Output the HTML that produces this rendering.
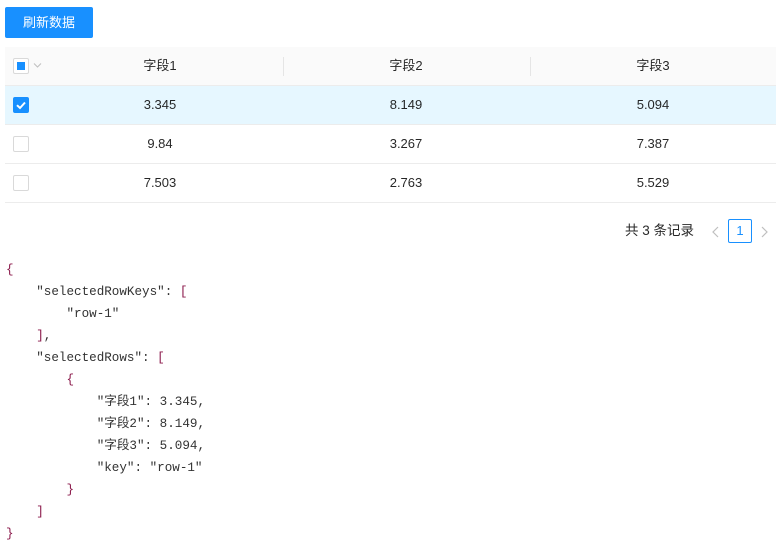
<!DOCTYPE html>
<html><head><meta charset="utf-8"><style>
body{margin:0;width:780px;height:555px;background:#fff;font-family:"Liberation Sans","Noto Sans CJK SC",sans-serif;font-size:13px;color:rgba(0,0,0,.85);position:relative;overflow:hidden}
.btn{position:absolute;left:5px;top:7px;width:88px;height:31px;background:#1890ff;border-radius:2px;color:#fff;font-size:13px;line-height:31px;text-align:center}
.tbl{position:absolute;left:5px;top:47px;width:771px}
.row{position:relative;height:38px;border-bottom:1px solid #ececec}
.row.h{background:#fafafa;height:38px}
.row.sel{background:#e6f7ff}
.c{position:absolute;top:0;height:38px;line-height:38px;text-align:center;width:246px}
.c1{left:32px}.c2{left:278px}.c3{left:525px}
.div{position:absolute;top:10px;width:1px;height:19px;background:#e5e5e5}
.cb{position:absolute;left:8px;top:11px;width:14px;height:14px;border:1px solid #d9d9d9;border-radius:2px;background:#fff}
.cb.on{background:#1890ff;border-color:#1890ff}
.json{position:absolute;left:6px;top:259px;margin:0;font-family:"Liberation Mono","Noto Sans CJK SC",monospace;font-size:12.6px;line-height:22px;color:#333}
.p{color:#8b1a4b}
.pg{position:absolute;top:219px}
</style></head><body>
<div class="btn">刷新数据</div>
<div class="tbl">
 <div class="row h">
  <div class="cb"><div style="position:absolute;left:3px;top:3px;width:8px;height:8px;background:#1890ff"></div></div>
  <svg style="position:absolute;left:28px;top:15px" width="9" height="7" viewBox="0 0 9 7"><path d="M1 1.5L4.5 5 8 1.5" fill="none" stroke="#bfbfbf" stroke-width="1"/></svg>
  <div class="c c1">字段1</div><div class="div" style="left:278px"></div>
  <div class="c c2">字段2</div><div class="div" style="left:525px"></div>
  <div class="c c3">字段3</div>
 </div>
 <div class="row sel">
  <div class="cb on"><svg width="14" height="14" viewBox="0 0 14 14" style="position:absolute;left:0;top:0"><path d="M3 7.2L6 10 11 4.5" fill="none" stroke="#fff" stroke-width="2"/></svg></div>
  <div class="c c1">3.345</div><div class="c c2">8.149</div><div class="c c3">5.094</div>
 </div>
 <div class="row"><div class="cb"></div><div class="c c1">9.84</div><div class="c c2">3.267</div><div class="c c3">7.387</div></div>
 <div class="row"><div class="cb"></div><div class="c c1">7.503</div><div class="c c2">2.763</div><div class="c c3">5.529</div></div>
</div>
<div class="pg" style="left:625px;line-height:24px;font-size:13.5px">共 3 条记录</div>
<svg class="pg" style="left:711px;top:226px" width="10" height="12" viewBox="0 0 10 12"><path d="M7 1L2 6l5 5" fill="none" stroke="#bfbfbf" stroke-width="1.2"/></svg>
<div class="pg" style="left:728px;width:22px;height:22px;border:1px solid #1890ff;border-radius:2px;color:#1890ff;text-align:center;line-height:22px">1</div>
<svg class="pg" style="left:759px;top:226px" width="10" height="12" viewBox="0 0 10 12"><path d="M3 1l5 5-5 5" fill="none" stroke="#bfbfbf" stroke-width="1.2"/></svg>
<pre class="json"><span class="p">{</span>
    "selectedRowKeys": <span class="p">[</span>
        "row-1"
    <span class="p">]</span>,
    "selectedRows": <span class="p">[</span>
        <span class="p">{</span>
            "字段1": 3.345,
            "字段2": 8.149,
            "字段3": 5.094,
            "key": "row-1"
        <span class="p">}</span>
    <span class="p">]</span>
<span class="p">}</span></pre>
</body></html>
